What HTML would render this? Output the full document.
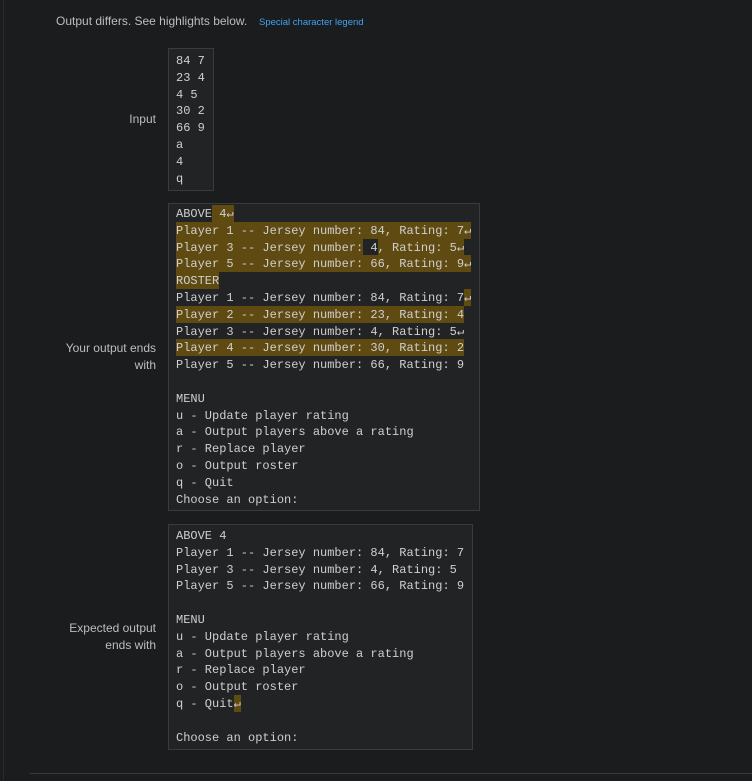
<!DOCTYPE html>
<html><head><style>
body{margin:0;background:#1b1c1e;width:752px;height:781px;overflow:hidden;position:relative;font-family:"Liberation Sans",sans-serif;}
.vl{position:absolute;left:3px;top:0;width:1px;height:781px;background:#2a2b2d}
.hl{position:absolute;left:30px;top:773px;width:722px;height:1px;background:#3a3b3d}
.msg{position:absolute;left:56px;top:14px;font-size:12px;color:#bdbdbd}
.leg{position:absolute;left:259px;top:17px;font-size:9.5px;color:#3fa3f5}
.lab{position:absolute;right:596px;font-size:12px;color:#bdbdbd;text-align:right;line-height:16.5px}
.box{position:absolute;left:168px;background:#222325;border:1px solid #3a3b3d;box-sizing:border-box;padding:5px 7px;font-family:"Liberation Mono",monospace;font-size:12px;line-height:16.8px;color:#cfcfcf;white-space:pre}
.h{background:#5f4a12;padding:2px 0 1px}
</style></head><body>
<div class="vl"></div><div class="hl"></div>
<div class="msg">Output differs. See highlights below.</div>
<div class="leg">Special character legend</div>
<div class="lab" style="top:111px">Input</div>
<div class="box" style="top:48px;width:46px;height:143px;padding-top:4px">84 7
23 4
4 5
30 2
66 9
a
4
q</div>
<div class="lab" style="top:340px">Your output ends<br>with</div>
<div class="box" style="top:203px;width:312px;height:308px;padding-top:2px">ABOVE<span class="h"> 4↵</span>
<span class="h">Player 1 -- Jersey number: 84, Rating: 7↵</span>
<span class="h">Player 3 -- Jersey number:</span> 4<span class="h">, Rating: 5↵</span>
<span class="h">Player 5 -- Jersey number: 66, Rating: 9↵</span>
<span class="h">ROSTER</span>
Player 1 -- Jersey number: 84, Rating: 7<span class="h">↵</span>
<span class="h">Player 2 -- Jersey number: 23, Rating: 4</span>
Player 3 -- Jersey number: 4, Rating: 5↵
<span class="h">Player 4 -- Jersey number: 30, Rating: 2</span>
Player 5 -- Jersey number: 66, Rating: 9

MENU
u - Update player rating
a - Output players above a rating
r - Replace player
o - Output roster
q - Quit
Choose an option:</div>
<div class="lab" style="top:620px">Expected output<br>ends with</div>
<div class="box" style="top:524px;width:305px;height:226px;padding-top:3px">ABOVE 4
Player 1 -- Jersey number: 84, Rating: 7
Player 3 -- Jersey number: 4, Rating: 5
Player 5 -- Jersey number: 66, Rating: 9

MENU
u - Update player rating
a - Output players above a rating
r - Replace player
o - Output roster
q - Quit<span class="h">↵</span>

Choose an option:</div>
</body></html>
